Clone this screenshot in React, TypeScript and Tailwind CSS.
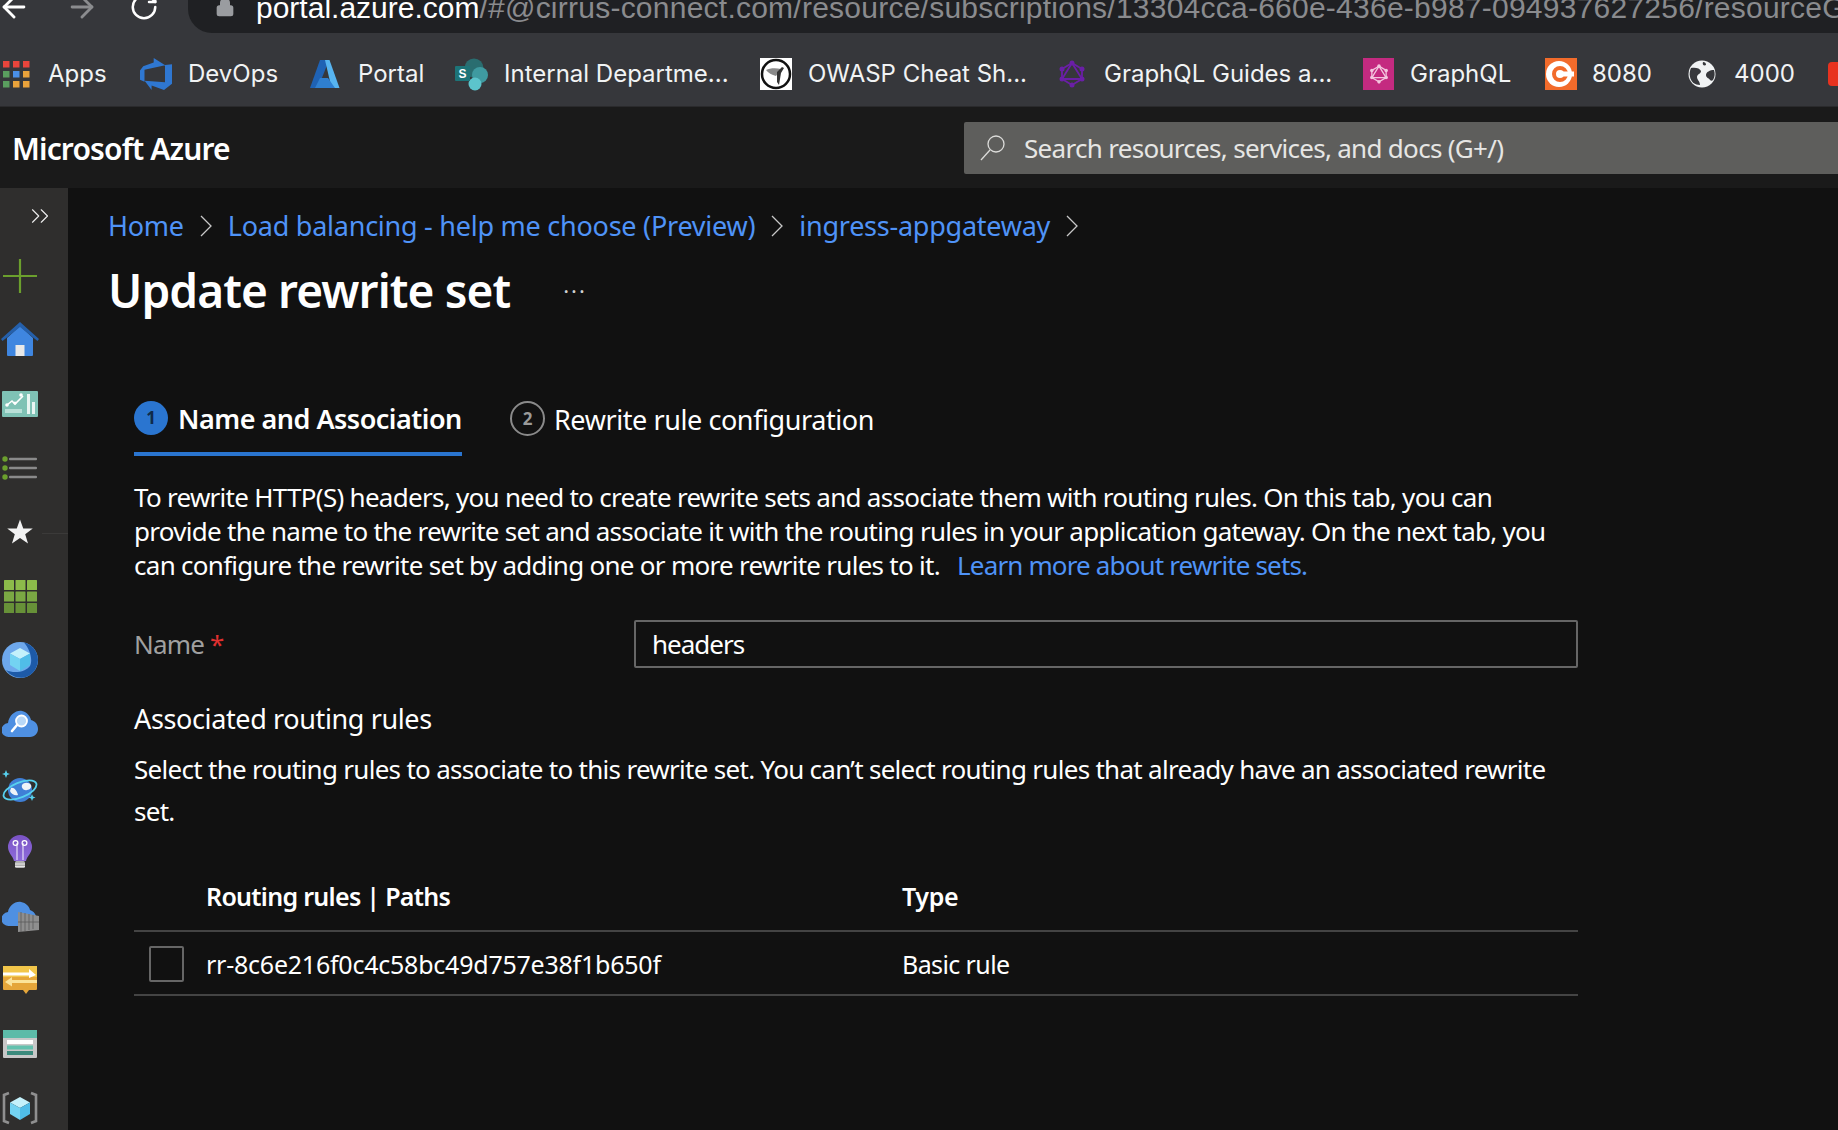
import React from "react";
import { ArrowLeft, ArrowRight, RotateCw, ChevronsRight, Lock } from "lucide-react";

const Apps = () => (
  <svg width="28" height="28" viewBox="0 0 28 28">
    {[["#e8453c","#e8453c","#e8453c"],["#5a9e5f","#4a8fe8","#e9a23b"],["#5a9e5f","#e9a23b","#e9a23b"]].map((r,i)=>r.map((c,j)=>(<rect key={`${i}${j}`} x={1+j*10} y={1+i*10} width="6.5" height="6.5" fill={c}/>)))}
  </svg>
);
const DevOps = () => (
  <svg width="32" height="32" viewBox="0 0 32 32"><path fill="#2f77d1" d="M32 6.3v19.4L24 32l-12.4-4.5v4.4l-7-9.2 20.4 1.6V7.1zM25.2 7.3L13.7 0v4.6L3.2 8.3 0 12.4v9.3l4.5 2V11.8z"/></svg>
);
const AzureA = () => (
  <svg width="30" height="30" viewBox="0 0 30 30">
    <path fill="#1f62b4" d="M10 1h9L8 29H0z"/>
    <path fill="#57b4f0" d="M15 1h4.500l10 28h-8z"/>
    <path fill="#2f7fd0" d="M10 19h8l7 10H5z"/>
  </svg>
);
const SharePoint = () => (
  <svg width="34" height="34" viewBox="0 0 34 34">
    <circle cx="19" cy="11" r="9.500" fill="#2a6d70"/>
    <circle cx="25" cy="18" r="8" fill="#3f9aa0"/>
    <circle cx="20" cy="27" r="6.500" fill="#5cc4cc"/>
    <rect x="0" y="9" width="15" height="15" rx="1" fill="#1d7478"/>
    <text x="7.500" y="21" textAnchor="middle" fontSize="12" fontWeight="700" fill="#fff" fontFamily="Liberation Sans, sans-serif">S</text>
  </svg>
);
const Owasp = () => (
  <svg width="32" height="32" viewBox="0 0 32 32">
    <rect width="32" height="32" fill="#fff"/>
    <circle cx="16" cy="16" r="14" fill="#fff" stroke="#111" strokeWidth="2.500"/>
    <path fill="#8a8a8a" d="M6 12C10 10 16 10 21 11L16 18C12 17 8 15 6 12z"/>
    <path fill="#333" d="M17 14 22 9l2 1-3 5-2 12-2-3z"/>
  </svg>
);
const GqlShape = ({ c, size = 28 }: { c: string; size?: number }) => (
  <svg width={size} height={size} viewBox="0 0 28 28" fill="none">
    <path d="M14 3 L24 9 V19 L14 25 L4 19 V9 Z" stroke={c} strokeWidth="1.800"/>
    <path d="M14 3 L24 19 H4 Z" stroke={c} strokeWidth="1.800"/>
    {[[14,3],[24,9],[24,19],[14,25],[4,19],[4,9]].map(([x,y],i)=>(<circle key={i} cx={x} cy={y} r="2.500" fill={c}/>))}
  </svg>
);
const Gql2 = () => (
  <div className="w-[31px] h-[32px] bg-[#c42a80] flex items-center justify-center"><GqlShape c="#f3c6de" size={20}/></div>
);
const CIcon = () => (
  <svg width="32" height="32" viewBox="0 0 32 32">
    <rect width="32" height="32" fill="#f26b2b"/>
    <circle cx="14" cy="16" r="13" fill="#fff"/>
    <circle cx="15" cy="16" r="6" fill="none" stroke="#f26b2b" strokeWidth="4"/>
    <rect x="15" y="13.500" width="14" height="5" fill="#fff"/>
  </svg>
);
const Globe = () => (
  <svg width="28" height="28" viewBox="0 0 28 28">
    <circle cx="14" cy="14" r="13.500" fill="#f1f3f4"/>
    <path fill="#36373b" d="M3 8c4-1 9 0 10 3 0 3-4 3-4 6 0 3 3 4 3 8-5 0-9-3-10-8-1-3 0-7 1-9zM26 10c-4 0-8 2-8 5 0 3 3 3 4 5 1 1 2 1 3 0 2-3 2-7 1-10zM15 2c2 0 3 1 3 3-2 1-4 0-3-3z"/>
  </svg>
);

const Plus = () => (
  <svg width="36" height="36" viewBox="0 0 36 36"><path d="M18 1v34M1 18h34" stroke="#6b9f2d" strokeWidth="2.200"/></svg>
);
const Home = () => (
  <svg width="38" height="38" viewBox="0 0 38 38">
    <path fill="#3f86e0" d="M6 17 19 5l13 12v17a1 1 0 0 1-1 1H7a1 1 0 0 1-1-1z"/>
    <path fill="#2560ab" d="M0 18 19 1l19 17-1.500 2L19 6 1.500 20z"/>
    <rect x="14.500" y="24" width="9" height="11" fill="#e8e8e8"/>
  </svg>
);
const Chart = () => (
  <svg width="36" height="26" viewBox="0 0 36 26">
    <rect width="36" height="26" rx="1" fill="#7fc2b5"/>
    <path d="M5 14 10 10l3 3 8-8" fill="none" stroke="#fff" strokeWidth="1.600"/>
    <circle cx="5" cy="14" r="1.800" fill="#fff"/><circle cx="13" cy="12" r="1.500" fill="#fff"/><circle cx="19" cy="4" r="1.800" fill="#fff"/>
    <rect x="3" y="18" width="17" height="4" fill="#b9e0d8"/>
    <rect x="25" y="3" width="3" height="20" fill="#e9f5f2"/>
    <rect x="30" y="11" width="3" height="12" fill="#e9f5f2"/>
  </svg>
);
const ListI = () => (
  <svg width="36" height="24" viewBox="0 0 36 24">
    {[3,12,21].map((y)=>(<g key={y}><circle cx="3" cy={y} r="2.700" fill="#6b9f2d"/><rect x="7" y={y-1.300} width="28" height="2.600" rx="1" fill="#8a8a8a"/></g>))}
  </svg>
);
const Star = () => (
  <svg width="26" height="26" viewBox="0 0 24 24"><path fill="#f2f2f2" d="M12 .5l3 8.300h8.800l-7 5.300 2.600 8.600L12 17.500l-7.400 5.200 2.600-8.600-7-5.300H9z"/></svg>
);
const Grid = () => (
  <svg width="33" height="33" viewBox="0 0 33 33">
    {[0,1,2].map((i)=>[0,1,2].map((j)=>(<rect key={`${i}${j}`} x={j*11.500} y={i*11.500} width="10" height="10" rx="0.500" fill={["#8cbb4a","#7aa843","#679138"][i]}/>)))}
  </svg>
);
const Cube = () => (
  <g>
    <path fill="#c4f1fb" d="M18 6l10 5.500-10 5.500-10-5.500z"/>
    <path fill="#73d3f2" d="M8 11.500l10 5.500v12l-10-6z"/>
    <path fill="#50bde8" d="M28 11.500 18 17v12l10-6z"/>
  </g>
);
const Sphere = () => (
  <svg width="36" height="36" viewBox="0 0 36 36">
    <circle cx="18" cy="18" r="18" fill="#6ea8ec"/>
    <path fill="#1d5aa8" d="M22 0.500A18 18 0 0 1 24 35c-6 2-15 0-20-7 8 4 20 2 24-4 3-6 0-17-6-23.500z"/>
    <Cube/>
  </svg>
);
const SearchCloud = () => (
  <svg width="36" height="28" viewBox="0 0 36 28">
    <path fill="#4f90e2" d="M7 27a7 7 0 0 1-1-14C7 5 14 0 20 1c5 1 8 5 9 9 4 1 7 4 7 9 0 4-3 8-8 8z"/>
    <circle cx="19.500" cy="11" r="5.500" fill="#b9d8f7" stroke="#fff" strokeWidth="1.800"/>
    <path d="M15 15 10 21" stroke="#fff" strokeWidth="2.600" strokeLinecap="round"/>
  </svg>
);
const Cosmos = () => (
  <svg width="36" height="36" viewBox="0 0 36 36">
    <circle cx="18" cy="20" r="12" fill="#3f7fd6"/>
    <path fill="#eef3f8" d="M9 18c3-1 6 3 7 7-3 1-7-1-8-4zM20 15c2-3 7-3 9 0 1 2-1 5-4 5-3 1-6-2-5-5z"/>
    <ellipse cx="18" cy="20" rx="17.500" ry="7.500" transform="rotate(-22 18 20)" fill="none" stroke="#57d0ee" strokeWidth="1.800"/>
    <path fill="#57d0ee" d="M4 0l1.200 3L8 4 5.200 5 4 8 2.800 5 0 4l2.800-1zM30 24l1 2.500 2.500 1-2.500 1-1 2.500-1-2.500-2.500-1 2.500-1z"/>
  </svg>
);
const Bulb = () => (
  <svg width="26" height="36" viewBox="0 0 26 36">
    <defs><linearGradient id="bb" x1="0" y1="0" x2="0" y2="1"><stop offset="0" stopColor="#7a52c4"/><stop offset="1" stopColor="#8e6cdc"/></linearGradient></defs>
    <path fill="url(#bb)" d="M13 1a12 12 0 0 1 12 12c0 6-5 9-6 14H7C6 22 1 19 1 13A12 12 0 0 1 13 1z"/>
    <path d="M10 9v17M16 9v17" stroke="#e5dcf7" strokeWidth="1.200"/>
    <circle cx="8.500" cy="9" r="2.400" fill="none" stroke="#fff" strokeWidth="1.200"/><circle cx="17.500" cy="9" r="2.400" fill="none" stroke="#fff" strokeWidth="1.200"/>
    <rect x="8" y="27" width="10" height="7" rx="1.500" fill="#b0b0b0"/>
    <path d="M8 30h10M8 32.500h10" stroke="#e5e5e5"/>
  </svg>
);
const CloudBox = () => (
  <svg width="37" height="31" viewBox="0 0 37 31">
    <path fill="#4f90e2" d="M7 25a7 7 0 0 1-1-14C7 5 13 0 19 1c5 1 8 4 9 8 3 1 5 3 6 6v10z"/>
    <path fill="#8e8e8e" d="M16 11l21 4v8H16zM16 20l21 2v7l-21 2z"/>
    <path d="M19 11v20M23 12v18M27 13v16M31 14v14M16 21h21" stroke="#5c5c5c" strokeWidth="0.800"/>
  </svg>
);
const Yellow = () => (
  <svg width="34" height="30" viewBox="0 0 34 30">
    <path fill="#e5a63a" d="M1 1h32a1 1 0 0 1 1 1v22a1 1 0 0 1-1 1H26l-3 4-3-4H1a1 1 0 0 1-1-1V2a1 1 0 0 1 1-1z"/>
    <rect x="0" y="1" width="34" height="11" fill="#f2c64a"/>
    <path fill="#fff" d="M0 7.500h26V4l7 6-7 3v-2.500H0z"/>
    <path fill="#fbe49a" d="M34 15H9v-3l-7 5 7 4.500V18h25z"/>
  </svg>
);
const TableI = () => (
  <svg width="34" height="28" viewBox="0 0 34 28">
    <rect width="34" height="28" rx="1" fill="#c8c8c8"/>
    <rect width="34" height="8" fill="#5cbba8"/>
    <rect x="4" y="10" width="26" height="4" fill="#fff"/>
    <rect x="4" y="15.500" width="26" height="4" fill="#63c1ae"/>
    <rect x="4" y="21" width="26" height="4" fill="#3b8a7c"/>
  </svg>
);
const Brackets = () => (
  <svg width="36" height="34" viewBox="0 0 36 34">
    <path d="M7 2 2 4v26l5 2M29 2l5 2v26l-5 2" fill="none" stroke="#8f8f8f" strokeWidth="2.600"/>
    <Cube/>
  </svg>
);
const Crumb = () => (
  <svg width="14" height="24" viewBox="0 0 14 24" fill="none" stroke="#c8c8c8" strokeWidth="1.300" className="mx-[15px] shrink-0"><path d="M2 2 12 12 2 22"/></svg>
);

const sideIcons = [<Plus/>, <Home/>, <Chart/>, <ListI/>, <Star/>, <Grid/>, <Sphere/>, <SearchCloud/>, <Cosmos/>, <Bulb/>, <CloudBox/>, <Yellow/>, <TableI/>, <Brackets/>];

const bookmarks: { w: string; gap: string; icon: React.ReactNode; label: string }[] = [
  { w: "w-[138px]", gap: "gap-[18px]", icon: <Apps/>, label: "Apps" },
  { w: "w-[170px]", gap: "gap-[16px]", icon: <DevOps/>, label: "DevOps" },
  { w: "w-[145px]", gap: "gap-[18px]", icon: <AzureA/>, label: "Portal" },
  { w: "w-[305px]", gap: "gap-[15px]", icon: <SharePoint/>, label: "Internal Departme..." },
  { w: "w-[298px]", gap: "gap-[16px]", icon: <Owasp/>, label: "OWASP Cheat Sh..." },
  { w: "w-[305px]", gap: "gap-[18px]", icon: <GqlShape c="#6a1fa6"/>, label: "GraphQL Guides a..." },
  { w: "w-[182px]", gap: "gap-[16px]", icon: <Gql2/>, label: "GraphQL" },
  { w: "w-[143px]", gap: "gap-[15px]", icon: <CIcon/>, label: "8080" },
  { w: "w-[140px]", gap: "gap-[18px]", icon: <Globe/>, label: "4000" },
];

export default function App() {
  return (
    <div className="w-[1838px] h-[1130px] overflow-hidden flex flex-col bg-[#111111] text-white font-['Noto_Sans',sans-serif]">
      <div className="h-[107px] shrink-0 bg-[#36373b] border-b border-[#2a2a2c] flex flex-col">
        <div className="h-[33px] shrink-0 flex overflow-hidden">
          <div className="h-[14px] w-[188px] shrink-0 flex items-center text-white">
            <ArrowLeft size={34} strokeWidth={2} className="-ml-[3px]"/>
            <ArrowRight size={34} strokeWidth={2} className="ml-[34px] text-[#8b8c8f]"/>
            <RotateCw size={30} strokeWidth={2} className="ml-[30px]"/>
          </div>
          <div className="flex-1 min-w-0 h-[33px] bg-[#1f2023] rounded-bl-[24px] flex items-start pl-[27px] overflow-hidden">
            <div className="h-[14px] flex items-center">
              <Lock size={20} fill="#9a9ca0" className="text-[#9a9ca0] shrink-0"/>
              <div className="ml-[21px] whitespace-nowrap text-[30px] font-['Liberation_Sans',sans-serif]">
                <span className="text-white">portal.azure.com</span>
                <span className="text-[#8a8b8e] tracking-[0.24px]">/#@cirrus-connect.com/resource/subscriptions/13304cca-660e-436e-b987-094937627256/resourceG</span>
              </div>
            </div>
          </div>
        </div>
        <div className="flex-1 flex items-center pl-[2px] pt-[8px] overflow-hidden">
          {bookmarks.map((b) => (
            <div key={b.label} className={`${b.w} ${b.gap} shrink-0 flex items-center`}>
              <div className="shrink-0 flex items-center">{b.icon}</div>
              <span className="text-[24px] text-[#f1f3f4] whitespace-nowrap font-['Inter',sans-serif]">{b.label}</span>
            </div>
          ))}
          <div className="w-[20px] h-[24px] bg-[#e8321f] rounded-[4px] shrink-0"/>
        </div>
      </div>

      <header className="h-[81px] shrink-0 bg-[#1a1a1a] flex items-center">
        <div className="w-[964px] pl-[12px] pt-[2px] text-[30px] font-semibold tracking-[-0.85px]">Microsoft Azure</div>
        <div className="flex-1 h-[52px] bg-[#5e5e5c] rounded-l-[2px] flex items-center pl-[16px] text-[#e6e6e4]">
          <svg width="26" height="28" viewBox="0 0 26 28" fill="none" stroke="#dcdcda" strokeWidth="1.300">
            <circle cx="16" cy="10" r="8"/><path d="M10 16 1 26"/>
          </svg>
          <span className="ml-[18px] text-[26px] tracking-[-0.7px] pt-[1px]">Search resources, services, and docs (G+/)</span>
        </div>
      </header>

      <div className="flex-1 flex min-h-0">
        <aside className="w-[68px] shrink-0 bg-[#2f2e2d] flex flex-col relative overflow-hidden">
          <div className="h-[56px] shrink-0 flex items-center justify-end pr-[13px]">
            <ChevronsRight size={30} strokeWidth={0.9} className="text-[#eeeeee]"/>
          </div>
          {sideIcons.map((ic, i) => (
            <div key={i} className="h-[64px] w-[40px] shrink-0 flex items-center justify-center">{ic}</div>
          ))}
          <div className="absolute left-[42px] right-0 top-[345px] h-[1px] bg-[#3b3a39]"/>
        </aside>

        <main className="flex-1 pl-[40px] min-w-0">
          <nav className="mt-[12px] h-[52px] flex items-center text-[27px] tracking-[-0.25px] text-[#4f93f7]">
            <span>Home</span>
            <Crumb/>
            <span>Load balancing - help me choose (Preview)</span>
            <Crumb/>
            <span>ingress-appgateway</span>
            <Crumb/>
          </nav>
          <div className="h-[60px] mt-[8px] flex items-center">
            <h1 className="text-[46px] font-semibold tracking-[-0.9px] leading-none">Update rewrite set</h1>
            <span className="ml-[53px] text-[22px] leading-none text-[#d0d0d0] tracking-[2px]">···</span>
          </div>

          <div className="pl-[26px] w-[1470px]">
            <div className="mt-[72px] h-[64px] flex items-start">
              <div className="h-[64px] w-[328px] border-b-4 border-[#2a75d0] flex items-center gap-[10px] pb-[6px]">
                <div className="w-[34px] h-[34px] shrink-0 rounded-full bg-[#2a75d0] flex items-center justify-center text-[17px] font-bold text-[#0f2a4a] mb-[2px]">1</div>
                <span className="text-[27px] font-semibold tracking-[-0.5px] whitespace-nowrap">Name and Association</span>
              </div>
              <div className="ml-[48px] h-[64px] flex items-center gap-[9px] pb-[8px]">
                <div className="w-[35px] h-[35px] shrink-0 rounded-full border-2 border-[#8a8a8a] flex items-center justify-center text-[17px] font-bold text-[#9a9a9a] mb-[3px]">2</div>
                <span className="text-[27px] tracking-[-0.42px] whitespace-nowrap">Rewrite rule configuration</span>
              </div>
            </div>

            <p className="mt-[24px] text-[26px] leading-[34px] tracking-[-0.72px] whitespace-nowrap">
              To rewrite HTTP(S) headers, you need to create rewrite sets and associate them with routing rules. On this tab, you can<br/>
              provide the name to the rewrite set and associate it with the routing rules in your application gateway. On the next tab, you<br/>
              can configure the rewrite set by adding one or more rewrite rules to it.&nbsp; <span className="text-[#4f93f7] ml-[5px] tracking-[-0.85px]">Learn more about rewrite sets.</span>
            </p>

            <div className="mt-[38px] flex items-center w-[1444px]">
              <div className="w-[500px] shrink-0 text-[26px] tracking-[-0.8px] text-[#a0a0a0]">Name <span className="text-[#e03030]">*</span></div>
              <div className="flex-1 h-[48px] rounded-[2px] border-2 border-[#666666] pl-[16px] flex items-center text-[26px] tracking-[-1px]">headers</div>
            </div>

            <h2 className="mt-[34px] h-[34px] flex items-center text-[27px] tracking-[-0.375px]">Associated routing rules</h2>
            <p className="mt-[12px] text-[26px] leading-[42px] tracking-[-0.71px] whitespace-nowrap">
              Select the routing rules to associate to this rewrite set. You can’t select routing rules that already have an associated rewrite<br/>set.
            </p>

            <div className="mt-[32px] w-[1444px]">
              <div className="h-[68px] flex items-center border-b-2 border-[#444444] text-[25px] font-semibold tracking-[-0.7px]">
                <span className="w-[768px] pl-[72px] shrink-0">Routing rules | Paths</span>
                <span className="tracking-[-0.4px]">Type</span>
              </div>
              <div className="h-[64px] flex items-center border-b-2 border-[#444444] text-[25px]">
                <div className="w-[72px] shrink-0 pl-[15px] pt-[1px]">
                  <div className="w-[35px] h-[36px] rounded-[2px] border-2 border-[#666666]"/>
                </div>
                <span className="w-[696px] shrink-0 tracking-[-0.23px] pt-[4px]">rr-8c6e216f0c4c58bc49d757e38f1b650f</span>
                <span className="tracking-[-0.6px] pt-[4px]">Basic rule</span>
              </div>
            </div>
          </div>
        </main>
      </div>
    </div>
  );
}
